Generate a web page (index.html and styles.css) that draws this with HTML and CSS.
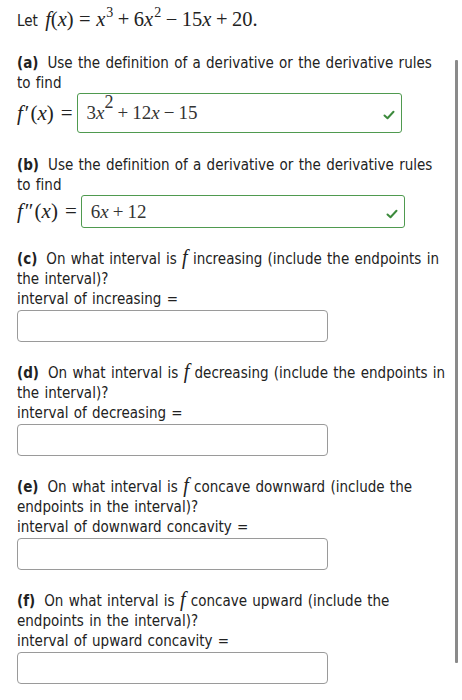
FILE: index.html
```html
<!DOCTYPE html>
<html>
<head>
<meta charset="utf-8">
<link rel="stylesheet" href="styles.css">
</head>
<body>
<div class="page">
  <p class="intro">Let <span class="m"><i>f</i>(<i>x</i>)<span class="rel">=</span><i>x</i><sup>3</sup><span class="op">+</span>6<i>x</i><sup>2</sup><span class="op">−</span>15<i>x</i><span class="op">+</span>20.</span></p>

  <section class="part">
    <p class="q"><b class="tag">(a)</b>Use the definition of a derivative or the derivative rules<br>to find</p>
    <div class="ansrow">
      <span class="m lbl"><i>f</i><span class="pr">′</span>(<i>x</i>)<span class="rel">=</span></span>
      <div class="mbox tall"><span class="val">3<i>x</i><sup class="hi">2</sup><span class="bop">+</span>12<i>x</i><span class="bop">−</span>15</span>
        <svg class="check" width="12" height="10" viewBox="0 0 12 10"><path d="M1.5 5.5 L4.5 8.2 L10.5 1.8" fill="none" stroke="#3c8a3c" stroke-width="2" stroke-linecap="round" stroke-linejoin="round"/></svg>
      </div>
    </div>
  </section>

  <section class="part second">
    <p class="q"><b class="tag">(b)</b>Use the definition of a derivative or the derivative rules<br>to find</p>
    <div class="ansrow">
      <span class="m lbl"><i>f</i><span class="pr">″</span>(<i>x</i>)<span class="rel">=</span></span>
      <div class="mbox short"><span class="val">6<i>x</i><span class="bop">+</span>12</span>
        <svg class="check" width="12" height="10" viewBox="0 0 12 10"><path d="M1.5 5.5 L4.5 8.2 L10.5 1.8" fill="none" stroke="#3c8a3c" stroke-width="2" stroke-linecap="round" stroke-linejoin="round"/></svg>
      </div>
    </div>
  </section>

  <section class="part">
    <p class="q"><b class="tag">(c)</b>On what interval is <i class="fi">f</i> increasing (include the endpoints in<br>the interval)?</p>
    <p class="q">interval of increasing =</p>
    <div class="ebox"></div>
  </section>

  <section class="part">
    <p class="q"><b class="tag">(d)</b>On what interval is <i class="fi">f</i> decreasing (include the endpoints in<br>the interval)?</p>
    <p class="q">interval of decreasing =</p>
    <div class="ebox"></div>
  </section>

  <section class="part">
    <p class="q"><b class="tag">(e)</b>On what interval is <i class="fi">f</i> concave downward (include the<br>endpoints in the interval)?</p>
    <p class="q">interval of downward concavity =</p>
    <div class="ebox"></div>
  </section>

  <section class="part">
    <p class="q"><b class="tag">(f)</b>On what interval is <i class="fi">f</i> concave upward (include the<br>endpoints in the interval)?</p>
    <p class="q">interval of upward concavity =</p>
    <div class="ebox"></div>
  </section>
</div>
<div class="scrollbar"></div>
</body>
</html>
```

FILE: styles.css
```css
html, body {
  margin: 0;
  padding: 0;
  background: #ffffff;
}
body {
  font-family: "DejaVu Sans Condensed", Lato, sans-serif;
  font-size: 15px;
  word-spacing: 1px;
  font-variant-ligatures: none;
  color: #222222;
  width: 462px;
  height: 700px;
  overflow: hidden;
  position: relative;
}
.page {
  padding: 10px 0 0 17px;
  width: 436px;
}
p { margin: 0; }
.intro {
  line-height: 22px;
  height: 22px;
  word-spacing: 0;
}
.m {
  font-family: "Liberation Serif", "DejaVu Serif", serif;
  font-size: 20.5px;
  margin-left: 3px;
  word-spacing: 0;
  line-height: 0;
}
.m i { font-style: italic; }
.m sup {
  font-size: 14px;
  line-height: 0;
  vertical-align: 9px;
  margin-left: 1px;
}
.rel { margin: 0 5.5px; }
.op { margin: 0 4.5px; }
.pr { margin: 0 1px 0 2px; }
.part { margin-top: 21px; }
.part.second { margin-top: 22px; }
.q {
  line-height: 20px;
  white-space: nowrap;
}
.tag {
  font-weight: 700;
  margin-right: 9px;
}
.fi {
  font-family: "Liberation Serif", serif;
  font-size: 20px;
  font-style: italic;
  line-height: 0;
}
.ansrow {
  display: flex;
  align-items: center;
}
.lbl {
  white-space: nowrap;
  margin-left: 0;
  line-height: normal;
  font-size: 21px;
}
.lbl .rel { margin: 0 0 0 7px; }
.mbox {
  box-sizing: border-box;
  border: 1.5px solid #4f9a4f;
  border-radius: 3px;
  display: flex;
  align-items: center;
  justify-content: space-between;
  padding: 0 6px 0 9px;
  font-family: "Liberation Serif", serif;
  font-size: 19px;
  color: #333;
  word-spacing: 0;
}
.mbox i { font-style: italic; }
.bop { margin: 0 4px; }
.mbox .hi {
  font-size: 18px;
  line-height: 0;
  vertical-align: 11px;
}
.mbox.tall {
  width: 325px;
  height: 40px;
  margin-left: 4px;
}
.mbox.short {
  width: 324px;
  height: 33px;
  margin-left: 4px;
}
.check { display: block; margin-top: 4px; }
.ebox {
  box-sizing: border-box;
  width: 311px;
  height: 32px;
  border: 1px solid #9a9a9a;
  border-radius: 4px;
  margin-top: 1px;
}
.scrollbar {
  position: absolute;
  left: 455px;
  top: 60px;
  width: 3px;
  height: 603px;
  background: #8a8a8a;
  border-radius: 1px;
}
```
